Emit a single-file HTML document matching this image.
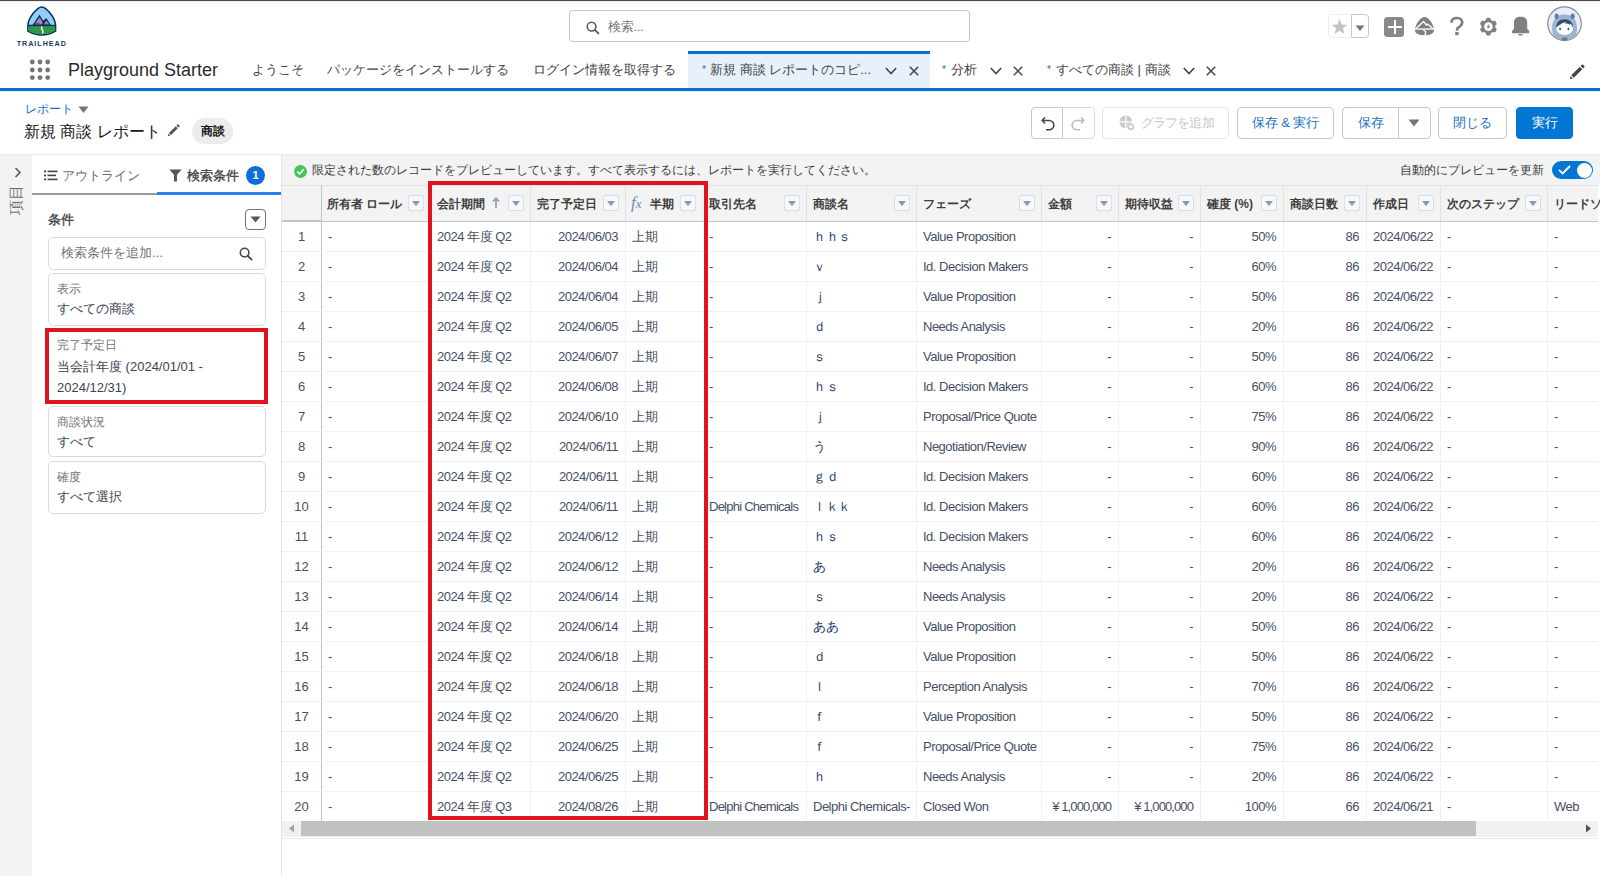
<!DOCTYPE html>
<html><head><meta charset="utf-8">
<style>
*{box-sizing:border-box;margin:0;padding:0}
html,body{width:1600px;height:876px;overflow:hidden;background:#fff;font-family:"Liberation Sans",sans-serif;color:#181818}
.a{position:absolute}
#topline{left:0;top:0;width:1600px;height:1px;background:#4a4a4a}
#hdr{left:0;top:1px;width:1600px;height:49px;background:linear-gradient(#e6e6e6,#fff 1px)}
#nav{left:0;top:50px;width:1600px;height:38px;background:#fff}
#navline{left:0;top:88px;width:1600px;height:3px;background:#0b6fd6}
#navshadow{left:0;top:91px;width:1600px;height:2px;background:linear-gradient(#e9e9e9,#fff)}
#ph{left:0;top:93px;width:1600px;height:61px;background:#fff}
#phline{left:0;top:154px;width:1600px;height:2px;background:#eaeaea}
#body{left:0;top:155px;width:1600px;height:721px;background:#f3f3f3}
.tab{position:absolute;top:51px;height:38px;font-size:13px;color:#444;line-height:38px;white-space:nowrap}
.btn{position:absolute;top:107px;height:32px;border:1px solid #c9c9c9;border-radius:4px;background:#fff;font-size:13px;color:#2270c4;text-align:center;line-height:30px;white-space:nowrap}
</style></head><body>
<div id="topline" class="a"></div>
<div id="hdr" class="a"></div>
<div id="nav" class="a"></div>
<div id="navline" class="a"></div>
<div id="navshadow" class="a"></div>
<div id="ph" class="a"></div>
<div id="body" class="a"></div>
<div id="phline" class="a"></div>

<svg class="a" style="left:0;top:0" width="80" height="50" viewBox="0 0 80 50">
 <path d="M41.7 6.9 C38 6.9 28 17 27.9 26 L27.9 31 C33 34 37 35 41.7 35 C46 35 50.5 34 55.6 31 L55.6 26 C55.5 17 45.5 6.9 41.7 6.9Z" fill="#92cdf5" stroke="#032d60" stroke-width="1.5"/>
 <path d="M28.3 25.8 L55.2 25.8 L55.2 30.8 C50.5 33.5 46 34.3 41.7 34.3 C37 34.3 33 33.5 28.3 30.8Z" fill="#2a9a45"/>
 <path d="M32.2 25.4 L39.5 14.8 L43.2 20.8 L46.2 17.9 L51.2 25.4Z" fill="#032d60"/>
 <path d="M34.3 24.6 L39.5 17.2 L42.5 22 L42 24.6Z" fill="#a48ab5"/>
 <path d="M43.5 24.6 L46.2 20.4 L49.4 24.6Z" fill="#a48ab5"/>
 <path d="M34.6 24.6 L36 22.5 L39 23 L40.5 24.6Z M44 24.6 L45 23.3 L47 24.6Z" fill="#8a35a8"/>
 <rect x="27.9" y="24.8" width="27.7" height="1.3" fill="#032d60"/>
 <path d="M42.3 26.6 C41 27.5 41.5 29 42.3 29.8 C43 30.5 43 32 42.6 33.6" stroke="#fff" stroke-width="1.5" fill="none"/>
 <text x="41.8" y="45.6" text-anchor="middle" font-family="Liberation Sans" font-weight="bold" font-size="7.2" letter-spacing="0.95" fill="#1b3c6b">TRAILHEAD</text>
</svg>
<div class="a" style="left:569px;top:10px;width:401px;height:32px;border:1px solid #c4c4c4;border-radius:4px;background:#fff"></div>
<svg class="a" style="left:586px;top:21px" width="14" height="14" viewBox="0 0 14 14"><circle cx="5.6" cy="5.6" r="4.4" stroke="#555" stroke-width="1.5" fill="none"/><path d="M8.8 8.8 L12.4 12.4" stroke="#555" stroke-width="1.8" stroke-linecap="round"/></svg>
<div class="a" style="left:608px;top:19px;font-size:13px;color:#757575;line-height:16px;letter-spacing:-0.3px">検索...</div>
<!-- star group -->
<div class="a" style="left:1328px;top:14px;width:41px;height:24px;border:1px solid #ececec;border-radius:4px;background:#fff"></div>
<div class="a" style="left:1351px;top:14px;width:18px;height:24px;border:1px solid #c9c9c9;border-radius:0 4px 4px 0;background:#fff"></div>
<svg class="a" style="left:1331px;top:18px" width="17" height="17" viewBox="0 0 24 24"><path d="M12 1.5 L15 9.2 L23 9.5 L16.8 14.6 L18.9 22.5 L12 18 L5.1 22.5 L7.2 14.6 L1 9.5 L9 9.2Z" fill="#c4c4c4"/></svg>
<svg class="a" style="left:1355px;top:25px" width="10" height="7" viewBox="0 0 10 7"><path d="M0.5 0.5 L9.5 0.5 L5 6Z" fill="#747474"/></svg>
<!-- plus -->
<div class="a" style="left:1384px;top:17px;width:20px;height:20px;background:#8a8a8a;border-radius:3.5px"></div>
<div class="a" style="left:1388px;top:26px;width:14px;height:1.8px;background:#fff"></div>
<div class="a" style="left:1394.2px;top:20px;width:1.8px;height:14px;background:#fff"></div>
<svg class="a" style="left:1410px;top:12px" width="125" height="30" viewBox="0 0 125 30">
 <g fill="#808080">
 <path d="M14.5 5 C10.5 5 5 12.5 5 18.5 C5 21.5 9 23.2 14.5 23.2 C20 23.2 24 21.5 24 18.5 C24 12.5 18.5 5 14.5 5Z"/>
 </g>
 <rect x="4.5" y="16.4" width="20" height="1.3" fill="#fff"/>
 <path d="M6.3 16.2 L13.6 9.4 L16.2 13 L17.4 12 L22.6 16.2" stroke="#fff" stroke-width="1.3" fill="none"/>
 <path d="M12.2 13.2 L10 16 L13.5 16Z M17.6 13.8 L16.2 16 L19.4 16Z" fill="#808080"/>
 <path d="M13.4 17.6 L15.8 20 L14.8 23.5" stroke="#fff" stroke-width="1.3" fill="none"/>
 <path d="M41.4 10.8 C41.4 7.4 43.8 6 46.9 6 C50.1 6 52.2 8 52.2 10.6 C52.2 13.4 50 14.4 48.5 15.4 C47.3 16.2 46.9 17 46.9 18.8" stroke="#808080" stroke-width="2.7" fill="none"/>
 <rect x="45.2" y="20" width="3.4" height="3.2" fill="#808080"/>
 <g transform="translate(78.4 14.6)" fill="#808080">
  <circle r="7"/>
  <rect x="-2.4" y="-8.8" width="4.8" height="17.6" rx="1.5"/>
  <rect x="-2.4" y="-8.8" width="4.8" height="17.6" rx="1.5" transform="rotate(60)"/>
  <rect x="-2.4" y="-8.8" width="4.8" height="17.6" rx="1.5" transform="rotate(120)"/>
  <circle r="4.3" fill="#fff"/>
  <path d="M0.9 -3 L-2 0.6 L-0.2 0.6 L-1 3.2 L2 -0.5 L0.2 -0.5Z"/>
 </g>
 <path d="M102 19.6 C102 18.3 103.6 17.5 104 16.5 L104 10.5 C104 6.5 106.5 4.7 110.6 4.7 C114.7 4.7 117.2 6.5 117.2 10.5 L117.2 16.5 C117.6 17.5 119.3 18.3 119.3 19.6 L119.3 20.2 C119.3 20.8 118.8 21.2 118.2 21.2 L103.1 21.2 C102.5 21.2 102 20.8 102 20.2Z" fill="#808080"/>
 <path d="M108.2 22 L112.9 22 C112.9 23 111.8 23.5 110.6 23.5 C109.4 23.5 108.2 23 108.2 22Z" fill="#808080"/>
</svg>
<!-- avatar -->
<svg class="a" style="left:1547px;top:6px" width="36" height="36" viewBox="0 0 36 36">
 <circle cx="17.5" cy="17.75" r="16.8" fill="#e6edf6" stroke="#8c8c8c" stroke-width="1.2"/>
 <clipPath id="avc"><circle cx="17.5" cy="17.75" r="16.2"/></clipPath>
 <g clip-path="url(#avc)">
 <path d="M8 36 C8 33 5.5 30 5.2 24 C4.8 14 9 8.5 17.6 8.5 C26.2 8.5 30.4 14 30 24 C29.7 30 27.2 33 27.2 36Z" fill="#9fb3cf"/>
 <ellipse cx="9.6" cy="10.2" rx="2" ry="2.8" fill="#5f7aa3"/>
 <ellipse cx="25.7" cy="10.2" rx="2" ry="2.8" fill="#5f7aa3"/>
 <ellipse cx="17.6" cy="22.4" rx="8.3" ry="6.6" fill="#fff"/>
 <path d="M9.4 22 C9 16.5 12.5 13.2 17.6 13.2 C22.7 13.2 26.2 16.5 25.8 22 C25 19 24 18 22.5 17.2 L23 19 C21 17.5 19.5 17.3 18 17.5 L18.8 16 C16.5 16.5 15 17 13.5 18.5 C12 19 10.5 20 9.4 22Z" fill="#2f4c7c"/>
 <ellipse cx="13.1" cy="23" rx="0.9" ry="1.3" fill="#2f4c7c"/>
 <ellipse cx="21.4" cy="23" rx="0.9" ry="1.3" fill="#2f4c7c"/>
 <ellipse cx="17.5" cy="34" rx="3.4" ry="2.4" fill="#5f7aa3"/>
 </g>
</svg>


<!-- app launcher dots -->
<svg class="a" style="left:29px;top:59px" width="24" height="23" viewBox="0 0 24 23">
 <g fill="#747474">
 <circle cx="3.3" cy="3" r="2.4"/><circle cx="11" cy="3" r="2.4"/><circle cx="18.7" cy="3" r="2.4"/>
 <circle cx="3.3" cy="11" r="2.4"/><circle cx="11" cy="11" r="2.4"/><circle cx="18.7" cy="11" r="2.4"/>
 <circle cx="3.3" cy="18.6" r="2.4"/><circle cx="11" cy="18.6" r="2.4"/><circle cx="18.7" cy="18.6" r="2.4"/>
 </g></svg>
<div class="a" id="appname" style="left:68px;top:58px;font-size:18px;line-height:24px;color:#2b2b2b;white-space:nowrap">Playground Starter</div>
<div class="tab" style="left:252px">ようこそ</div>
<div class="tab" style="left:327px">パッケージをインストールする</div>
<div class="tab" style="left:533px">ログイン情報を取得する</div>
<div class="a" style="left:688px;top:51px;width:242px;height:3px;background:#0b6fd6"></div>
<div class="a" style="left:688px;top:54px;width:242px;height:34px;background:#e8f1fb"></div>
<div class="a" style="left:702px;top:64px;font-size:10px;color:#0b6fd6;line-height:12px">*</div>
<div class="tab" style="left:710px">新規 商談 レポートのコピ...</div>
<svg class="a" style="left:885px;top:67px" width="12" height="8" viewBox="0 0 12 8"><path d="M0.8 1 L6 6.6 L11.2 1" stroke="#444" stroke-width="1.6" fill="none"/></svg><svg class="a" style="left:909px;top:66px" width="10" height="10" viewBox="0 0 10 10"><path d="M0.8 0.8 L9.2 9.2 M9.2 0.8 L0.8 9.2" stroke="#444" stroke-width="1.5" fill="none"/></svg>
<div class="a" style="left:942px;top:64px;font-size:10px;color:#0b6fd6;line-height:12px">*</div>
<div class="tab" style="left:951px">分析</div>
<svg class="a" style="left:990px;top:67px" width="12" height="8" viewBox="0 0 12 8"><path d="M0.8 1 L6 6.6 L11.2 1" stroke="#444" stroke-width="1.6" fill="none"/></svg><svg class="a" style="left:1013px;top:66px" width="10" height="10" viewBox="0 0 10 10"><path d="M0.8 0.8 L9.2 9.2 M9.2 0.8 L0.8 9.2" stroke="#444" stroke-width="1.5" fill="none"/></svg>
<div class="a" style="left:1047px;top:64px;font-size:10px;color:#0b6fd6;line-height:12px">*</div>
<div class="tab" style="left:1056px">すべての商談 | 商談</div>
<svg class="a" style="left:1183px;top:67px" width="12" height="8" viewBox="0 0 12 8"><path d="M0.8 1 L6 6.6 L11.2 1" stroke="#444" stroke-width="1.6" fill="none"/></svg><svg class="a" style="left:1206px;top:66px" width="10" height="10" viewBox="0 0 10 10"><path d="M0.8 0.8 L9.2 9.2 M9.2 0.8 L0.8 9.2" stroke="#444" stroke-width="1.5" fill="none"/></svg>
<svg class="a" style="left:1569px;top:64px" width="16" height="16" viewBox="0 0 16 16"><path d="M1.5 12 L1 15 L4 14.5Z M2.3 11.2 L10.8 2.7 L13.3 5.2 L4.8 13.7Z M11.6 1.9 L12.8 0.7 C13.2 0.3 13.7 0.3 14.1 0.7 L15.3 1.9 C15.7 2.3 15.7 2.8 15.3 3.2 L14.1 4.4Z" fill="#444"/></svg>


<div class="a" style="left:25px;top:101px;font-size:12.2px;line-height:16px;color:#0b6fd6">レポート</div>
<svg class="a" style="left:78px;top:106px" width="11" height="8" viewBox="0 0 11 8"><path d="M0.5 0.5 L10.5 0.5 L5.5 7Z" fill="#747474"/></svg>
<div class="a" style="left:24px;top:121px;font-size:16px;line-height:22px;color:#181818;white-space:nowrap">新規 商談 レポート</div>
<svg class="a" style="left:167px;top:124px" width="13" height="13" viewBox="0 0 16 16"><path d="M1.5 12 L1 15 L4 14.5Z M2.3 11.2 L10.8 2.7 L13.3 5.2 L4.8 13.7Z M11.6 1.9 L12.8 0.7 C13.2 0.3 13.7 0.3 14.1 0.7 L15.3 1.9 C15.7 2.3 15.7 2.8 15.3 3.2 L14.1 4.4Z" fill="#555"/></svg>
<div class="a" style="left:192px;top:118px;width:41px;height:26px;border-radius:13px;background:#ececec;font-size:12px;font-weight:bold;line-height:26px;text-align:center;color:#181818">商談</div>
<!-- buttons -->
<div class="btn" style="left:1031px;width:64px;border-color:#dddbda"></div>
<div class="btn" style="left:1031px;width:32px;border-color:#c9c9c9;border-radius:4px 0 0 4px"></div>
<svg class="a" style="left:1041px;top:116px" width="14" height="15" viewBox="0 0 14 15"><path d="M4 1.5 L1.2 4.5 L4 7.5" stroke="#444" stroke-width="1.6" fill="none"/><path d="M1.5 4.5 L8 4.5 C10.8 4.5 12.8 6.5 12.8 9.2 C12.8 11.8 10.8 13.8 8 13.8 L5 13.8" stroke="#444" stroke-width="1.6" fill="none"/></svg>
<svg class="a" style="left:1071px;top:116px" width="14" height="15" viewBox="0 0 14 15"><g transform="translate(14,0) scale(-1,1)"><path d="M4 1.5 L1.2 4.5 L4 7.5" stroke="#bbb" stroke-width="1.6" fill="none"/><path d="M1.5 4.5 L8 4.5 C10.8 4.5 12.8 6.5 12.8 9.2 C12.8 11.8 10.8 13.8 8 13.8 L5 13.8" stroke="#bbb" stroke-width="1.6" fill="none"/></g></svg>
<div class="btn" style="left:1102px;width:127px;border-color:#e5e5e5;color:#c9c9c9;text-align:left;padding-left:38px;letter-spacing:-0.9px">グラフを追加</div>
<svg class="a" style="left:1119px;top:115px" width="16" height="16" viewBox="0 0 16 16"><circle cx="6.8" cy="6.8" r="6.3" fill="#c9c9c9"/><path d="M6.8 0.5 L6.8 13 M0.5 6.8 L13 6.8" stroke="#fff" stroke-width="1.2"/><circle cx="11.8" cy="11.8" r="3.6" fill="#fff"/><circle cx="11.8" cy="11.8" r="2.6" fill="none" stroke="#c9c9c9" stroke-width="1.6"/></svg>
<div class="btn" style="left:1237px;width:97px">保存 &amp; 実行</div>
<div class="btn" style="left:1342px;width:89px"></div>
<div class="btn" style="left:1342px;width:57px;border-radius:4px 0 0 4px;border-right-color:#c9c9c9">保存</div>
<svg class="a" style="left:1408px;top:119px" width="12" height="8" viewBox="0 0 12 8"><path d="M0.5 0.5 L11.5 0.5 L6 7.5Z" fill="#747474"/></svg>
<div class="btn" style="left:1438px;width:69px">閉じる</div>
<div class="btn" style="left:1516px;width:57px;background:#0176d3;border-color:#0176d3;color:#fff">実行</div>


<div class="a" style="left:0;top:155px;width:32px;height:721px;background:#f3f3f3"></div>
<svg class="a" style="left:14px;top:167px" width="8" height="11" viewBox="0 0 8 11"><path d="M1.5 1 L6 5.5 L1.5 10" stroke="#555" stroke-width="1.5" fill="none"/></svg>
<div class="a" style="left:0px;top:184px;width:32px;height:32px"><div style="position:absolute;left:-1px;top:8px;width:34px;text-align:center;font-size:15px;line-height:16px;color:#706e6b;transform:rotate(-90deg)">項目</div></div>
<div class="a" style="left:32px;top:155px;width:249px;height:721px;background:#fff"></div>
<div class="a" style="left:281px;top:155px;width:1px;height:721px;background:#dde4ee"></div>
<svg class="a" style="left:44px;top:170px" width="14" height="11" viewBox="0 0 14 11"><g fill="#444"><rect x="0" y="0.5" width="2" height="1.8"/><rect x="0" y="4.5" width="2" height="1.8"/><rect x="0" y="8.5" width="2" height="1.8"/><rect x="3.5" y="0.6" width="10" height="1.6"/><rect x="3.5" y="4.6" width="8.5" height="1.6"/><rect x="3.5" y="8.6" width="10" height="1.6"/></g></svg>
<div class="a" style="left:62px;top:168px;font-size:13px;line-height:16px;color:#706e6b;white-space:nowrap">アウトライン</div>
<svg class="a" style="left:169px;top:169px" width="13" height="13" viewBox="0 0 13 13"><path d="M0.3 0.5 L12.7 0.5 L8 5.8 L8 12.5 L5 12.5 L5 5.8Z" fill="#555"/></svg>
<div class="a" style="left:187px;top:168px;font-size:13px;line-height:16px;color:#444;-webkit-text-stroke:0.35px #444;white-space:nowrap">検索条件</div>
<div class="a" style="left:246px;top:166px;width:19px;height:19px;border-radius:50%;background:#0b6fd6;color:#fff;font-size:11px;font-weight:bold;line-height:19px;text-align:center">1</div>
<div class="a" style="left:32px;top:193px;width:125px;height:2px;background:#9a9a9a"></div>
<div class="a" style="left:157px;top:192px;width:124px;height:3px;background:#2a7ff0"></div>
<div class="a" style="left:48px;top:212px;font-size:13px;line-height:16px;color:#444;-webkit-text-stroke:0.35px #444">条件</div>
<div class="a" style="left:245px;top:209px;width:21px;height:21px;border:1px solid #747474;border-radius:4px;background:#fff"></div>
<svg class="a" style="left:250px;top:216px" width="11" height="7" viewBox="0 0 11 7"><path d="M0.5 0.5 L10.5 0.5 L5.5 6.5Z" fill="#555"/></svg>
<div class="a" style="left:48px;top:237px;width:218px;height:33px;border:1px solid #dddbda;border-radius:5px;background:#fff"></div>
<div class="a" style="left:61px;top:245px;font-size:13px;line-height:16px;color:#747474;white-space:nowrap">検索条件を追加...</div>
<svg class="a" style="left:239px;top:247px" width="14" height="14" viewBox="0 0 14 14"><circle cx="5.6" cy="5.6" r="4.3" stroke="#444" stroke-width="1.5" fill="none"/><path d="M8.8 8.8 L12.6 12.6" stroke="#444" stroke-width="1.8" stroke-linecap="round"/></svg>
<div class="a" style="left:48px;top:273px;width:218px;height:53px;border:1px solid #dddbda;border-radius:5px;background:#fff"></div>
<div class="a" style="left:57px;top:281px;font-size:12px;line-height:16px;color:#747474;white-space:nowrap">表示</div>
<div class="a" style="left:57px;top:299px;font-size:13px;line-height:20px;color:#3a4354;white-space:nowrap">すべての商談</div>
<div class="a" style="left:48px;top:330px;width:218px;height:74px;background:#fff"></div>
<div class="a" style="left:57px;top:337px;font-size:12px;line-height:16px;color:#747474;white-space:nowrap">完了予定日</div>
<div class="a" style="left:57px;top:356px;font-size:13px;line-height:21px;color:#3a4354;white-space:nowrap">当会計年度 (2024/01/01 -<br>2024/12/31)</div>
<div class="a" style="left:48px;top:406px;width:218px;height:51px;border:1px solid #dddbda;border-radius:5px;background:#fff"></div>
<div class="a" style="left:57px;top:414px;font-size:12px;line-height:16px;color:#747474;white-space:nowrap">商談状況</div>
<div class="a" style="left:57px;top:432px;font-size:13px;line-height:20px;color:#3a4354;white-space:nowrap">すべて</div>
<div class="a" style="left:48px;top:461px;width:218px;height:53px;border:1px solid #dddbda;border-radius:5px;background:#fff"></div>
<div class="a" style="left:57px;top:469px;font-size:12px;line-height:16px;color:#747474;white-space:nowrap">確度</div>
<div class="a" style="left:57px;top:487px;font-size:13px;line-height:20px;color:#3a4354;white-space:nowrap">すべて選択</div>
<div class="a" style="left:45px;top:328px;width:223px;height:76px;border:4px solid #e0141e"></div>

<!--MAINSTART-->
<div class="a" style="left:282px;top:155px;width:1318px;height:30px;background:#f3f3f3"></div>
<svg class="a" style="left:294px;top:165px" width="13" height="13" viewBox="0 0 13 13"><circle cx="6.5" cy="6.5" r="6.5" fill="#45c65a"/><path d="M3.3 6.7 L5.5 8.8 L9.8 4.4" stroke="#fff" stroke-width="1.6" fill="none"/></svg>
<div class="a" style="left:312px;top:162px;font-size:12px;line-height:16px;color:#3e3e3c;white-space:nowrap">限定された数のレコードをプレビューしています。すべて表示するには、レポートを実行してください。</div>
<div class="a" style="left:1400px;top:162px;font-size:12px;line-height:16px;color:#3e3e3c;white-space:nowrap">自動的にプレビューを更新</div>
<div class="a" style="left:1552px;top:161px;width:41px;height:18px;border-radius:9px;background:#0176d3"></div>
<div class="a" style="left:1577px;top:162.5px;width:15px;height:15px;border-radius:50%;background:#fff"></div>
<svg class="a" style="left:1558px;top:165px" width="13" height="10" viewBox="0 0 13 10"><path d="M1 4.8 L4.6 8.4 L12 1" stroke="#fff" stroke-width="1.8" fill="none"/></svg>
<div class="a" style="left:282px;top:185px;width:1318px;height:691px;background:#fff"></div>
<div class="a" style="left:282px;top:185px;width:1316px;height:36px;background:#f3f3f3;border-top:1px solid #e0e0e0"></div>
<div class="a" style="left:282px;top:220px;width:39px;height:2px;background:#c4c4c4"></div>
<div class="a" style="left:322px;top:221px;width:1276px;height:1px;background:#bcc8d6"></div>
<div class="a" style="left:321px;top:185px;width:1px;height:636px;background:#b8c6d6"></div>
<div class="a" style="left:430px;top:186px;width:1px;height:35px;background:#dfe3e8"></div>
<div class="a" style="left:430px;top:222px;width:1px;height:599px;background:#eef1f5"></div>
<div class="a" style="left:530px;top:186px;width:1px;height:35px;background:#dfe3e8"></div>
<div class="a" style="left:530px;top:222px;width:1px;height:599px;background:#eef1f5"></div>
<div class="a" style="left:625px;top:186px;width:1px;height:35px;background:#dfe3e8"></div>
<div class="a" style="left:625px;top:222px;width:1px;height:599px;background:#eef1f5"></div>
<div class="a" style="left:705px;top:186px;width:1px;height:35px;background:#dfe3e8"></div>
<div class="a" style="left:705px;top:222px;width:1px;height:599px;background:#eef1f5"></div>
<div class="a" style="left:806px;top:186px;width:1px;height:35px;background:#dfe3e8"></div>
<div class="a" style="left:806px;top:222px;width:1px;height:599px;background:#eef1f5"></div>
<div class="a" style="left:916px;top:186px;width:1px;height:35px;background:#dfe3e8"></div>
<div class="a" style="left:916px;top:222px;width:1px;height:599px;background:#eef1f5"></div>
<div class="a" style="left:1041px;top:186px;width:1px;height:35px;background:#dfe3e8"></div>
<div class="a" style="left:1041px;top:222px;width:1px;height:599px;background:#eef1f5"></div>
<div class="a" style="left:1118px;top:186px;width:1px;height:35px;background:#dfe3e8"></div>
<div class="a" style="left:1118px;top:222px;width:1px;height:599px;background:#eef1f5"></div>
<div class="a" style="left:1200px;top:186px;width:1px;height:35px;background:#dfe3e8"></div>
<div class="a" style="left:1200px;top:222px;width:1px;height:599px;background:#eef1f5"></div>
<div class="a" style="left:1283px;top:186px;width:1px;height:35px;background:#dfe3e8"></div>
<div class="a" style="left:1283px;top:222px;width:1px;height:599px;background:#eef1f5"></div>
<div class="a" style="left:1366px;top:186px;width:1px;height:35px;background:#dfe3e8"></div>
<div class="a" style="left:1366px;top:222px;width:1px;height:599px;background:#eef1f5"></div>
<div class="a" style="left:1440px;top:186px;width:1px;height:35px;background:#dfe3e8"></div>
<div class="a" style="left:1440px;top:222px;width:1px;height:599px;background:#eef1f5"></div>
<div class="a" style="left:1547px;top:186px;width:1px;height:35px;background:#dfe3e8"></div>
<div class="a" style="left:1547px;top:222px;width:1px;height:599px;background:#eef1f5"></div>
<div class="a" style="left:282px;top:251px;width:1316px;height:1px;background:#eceff3"></div>
<div class="a" style="left:282px;top:281px;width:1316px;height:1px;background:#eceff3"></div>
<div class="a" style="left:282px;top:311px;width:1316px;height:1px;background:#eceff3"></div>
<div class="a" style="left:282px;top:341px;width:1316px;height:1px;background:#eceff3"></div>
<div class="a" style="left:282px;top:371px;width:1316px;height:1px;background:#eceff3"></div>
<div class="a" style="left:282px;top:401px;width:1316px;height:1px;background:#eceff3"></div>
<div class="a" style="left:282px;top:431px;width:1316px;height:1px;background:#eceff3"></div>
<div class="a" style="left:282px;top:461px;width:1316px;height:1px;background:#eceff3"></div>
<div class="a" style="left:282px;top:491px;width:1316px;height:1px;background:#eceff3"></div>
<div class="a" style="left:282px;top:521px;width:1316px;height:1px;background:#eceff3"></div>
<div class="a" style="left:282px;top:551px;width:1316px;height:1px;background:#eceff3"></div>
<div class="a" style="left:282px;top:581px;width:1316px;height:1px;background:#eceff3"></div>
<div class="a" style="left:282px;top:611px;width:1316px;height:1px;background:#eceff3"></div>
<div class="a" style="left:282px;top:641px;width:1316px;height:1px;background:#eceff3"></div>
<div class="a" style="left:282px;top:671px;width:1316px;height:1px;background:#eceff3"></div>
<div class="a" style="left:282px;top:701px;width:1316px;height:1px;background:#eceff3"></div>
<div class="a" style="left:282px;top:731px;width:1316px;height:1px;background:#eceff3"></div>
<div class="a" style="left:282px;top:761px;width:1316px;height:1px;background:#eceff3"></div>
<div class="a" style="left:282px;top:791px;width:1316px;height:1px;background:#eceff3"></div>
<div class="a" style="left:327px;top:196px;font-size:12px;font-weight:bold;line-height:16px;color:#3e3e3c;white-space:nowrap">所有者 ロール</div>
<div class="a" style="left:408px;top:195px;width:16px;height:16px;border:1px solid #d8dde6;border-radius:2px;background:#f8f8f8"></div><svg class="a" style="left:412px;top:201px" width="8" height="5" viewBox="0 0 8 5"><path d="M0 0 L8 0 L4 5Z" fill="#7d9ac0"/></svg>
<div class="a" style="left:437px;top:196px;font-size:12px;font-weight:bold;line-height:16px;color:#3e3e3c;white-space:nowrap">会計期間</div>
<div class="a" style="left:508px;top:195px;width:16px;height:16px;border:1px solid #d8dde6;border-radius:2px;background:#f8f8f8"></div><svg class="a" style="left:512px;top:201px" width="8" height="5" viewBox="0 0 8 5"><path d="M0 0 L8 0 L4 5Z" fill="#7d9ac0"/></svg>
<div class="a" style="left:537px;top:196px;font-size:12px;font-weight:bold;line-height:16px;color:#3e3e3c;white-space:nowrap">完了予定日</div>
<div class="a" style="left:603px;top:195px;width:16px;height:16px;border:1px solid #d8dde6;border-radius:2px;background:#f8f8f8"></div><svg class="a" style="left:607px;top:201px" width="8" height="5" viewBox="0 0 8 5"><path d="M0 0 L8 0 L4 5Z" fill="#7d9ac0"/></svg>
<div class="a" style="left:631px;top:194px;font-family:'Liberation Serif',serif;font-style:italic;font-size:17px;line-height:18px;color:#6f8ab3;white-space:nowrap">f<span style="font-size:13px">x</span></div>
<div class="a" style="left:650px;top:196px;font-size:12px;font-weight:bold;line-height:16px;color:#3e3e3c;white-space:nowrap">半期</div>
<div class="a" style="left:680px;top:195px;width:16px;height:16px;border:1px solid #d8dde6;border-radius:2px;background:#f8f8f8"></div><svg class="a" style="left:684px;top:201px" width="8" height="5" viewBox="0 0 8 5"><path d="M0 0 L8 0 L4 5Z" fill="#7d9ac0"/></svg>
<div class="a" style="left:709px;top:196px;font-size:12px;font-weight:bold;line-height:16px;color:#3e3e3c;white-space:nowrap">取引先名</div>
<div class="a" style="left:784px;top:195px;width:16px;height:16px;border:1px solid #d8dde6;border-radius:2px;background:#f8f8f8"></div><svg class="a" style="left:788px;top:201px" width="8" height="5" viewBox="0 0 8 5"><path d="M0 0 L8 0 L4 5Z" fill="#7d9ac0"/></svg>
<div class="a" style="left:813px;top:196px;font-size:12px;font-weight:bold;line-height:16px;color:#3e3e3c;white-space:nowrap">商談名</div>
<div class="a" style="left:894px;top:195px;width:16px;height:16px;border:1px solid #d8dde6;border-radius:2px;background:#f8f8f8"></div><svg class="a" style="left:898px;top:201px" width="8" height="5" viewBox="0 0 8 5"><path d="M0 0 L8 0 L4 5Z" fill="#7d9ac0"/></svg>
<div class="a" style="left:923px;top:196px;font-size:12px;font-weight:bold;line-height:16px;color:#3e3e3c;white-space:nowrap">フェーズ</div>
<div class="a" style="left:1019px;top:195px;width:16px;height:16px;border:1px solid #d8dde6;border-radius:2px;background:#f8f8f8"></div><svg class="a" style="left:1023px;top:201px" width="8" height="5" viewBox="0 0 8 5"><path d="M0 0 L8 0 L4 5Z" fill="#7d9ac0"/></svg>
<div class="a" style="left:1048px;top:196px;font-size:12px;font-weight:bold;line-height:16px;color:#3e3e3c;white-space:nowrap">金額</div>
<div class="a" style="left:1096px;top:195px;width:16px;height:16px;border:1px solid #d8dde6;border-radius:2px;background:#f8f8f8"></div><svg class="a" style="left:1100px;top:201px" width="8" height="5" viewBox="0 0 8 5"><path d="M0 0 L8 0 L4 5Z" fill="#7d9ac0"/></svg>
<div class="a" style="left:1125px;top:196px;font-size:12px;font-weight:bold;line-height:16px;color:#3e3e3c;white-space:nowrap">期待収益</div>
<div class="a" style="left:1178px;top:195px;width:16px;height:16px;border:1px solid #d8dde6;border-radius:2px;background:#f8f8f8"></div><svg class="a" style="left:1182px;top:201px" width="8" height="5" viewBox="0 0 8 5"><path d="M0 0 L8 0 L4 5Z" fill="#7d9ac0"/></svg>
<div class="a" style="left:1207px;top:196px;font-size:12px;font-weight:bold;line-height:16px;color:#3e3e3c;white-space:nowrap">確度 (%)</div>
<div class="a" style="left:1261px;top:195px;width:16px;height:16px;border:1px solid #d8dde6;border-radius:2px;background:#f8f8f8"></div><svg class="a" style="left:1265px;top:201px" width="8" height="5" viewBox="0 0 8 5"><path d="M0 0 L8 0 L4 5Z" fill="#7d9ac0"/></svg>
<div class="a" style="left:1290px;top:196px;font-size:12px;font-weight:bold;line-height:16px;color:#3e3e3c;white-space:nowrap">商談日数</div>
<div class="a" style="left:1344px;top:195px;width:16px;height:16px;border:1px solid #d8dde6;border-radius:2px;background:#f8f8f8"></div><svg class="a" style="left:1348px;top:201px" width="8" height="5" viewBox="0 0 8 5"><path d="M0 0 L8 0 L4 5Z" fill="#7d9ac0"/></svg>
<div class="a" style="left:1373px;top:196px;font-size:12px;font-weight:bold;line-height:16px;color:#3e3e3c;white-space:nowrap">作成日</div>
<div class="a" style="left:1418px;top:195px;width:16px;height:16px;border:1px solid #d8dde6;border-radius:2px;background:#f8f8f8"></div><svg class="a" style="left:1422px;top:201px" width="8" height="5" viewBox="0 0 8 5"><path d="M0 0 L8 0 L4 5Z" fill="#7d9ac0"/></svg>
<div class="a" style="left:1447px;top:196px;font-size:12px;font-weight:bold;line-height:16px;color:#3e3e3c;white-space:nowrap">次のステップ</div>
<div class="a" style="left:1525px;top:195px;width:16px;height:16px;border:1px solid #d8dde6;border-radius:2px;background:#f8f8f8"></div><svg class="a" style="left:1529px;top:201px" width="8" height="5" viewBox="0 0 8 5"><path d="M0 0 L8 0 L4 5Z" fill="#7d9ac0"/></svg>
<div class="a" style="left:1554px;top:196px;font-size:12px;font-weight:bold;line-height:16px;color:#3e3e3c;white-space:nowrap">リードソース</div>
<svg class="a" style="left:492px;top:197px" width="8" height="12" viewBox="0 0 8 12"><path d="M4 11 L4 1.5 M1 4.5 L4 1.2 L7 4.5" stroke="#7d9ac0" stroke-width="1.5" fill="none"/></svg>
<div class="a" style="left:282px;top:229px;width:39px;text-align:center;font-size:13px;line-height:16px;color:#465064">1</div>
<div class="a" style="left:328px;top:229px;font-size:13px;letter-spacing:-0.5px;line-height:16px;color:#465064;white-space:nowrap">-</div>
<div class="a" style="left:437px;top:229px;font-size:13px;letter-spacing:-0.5px;line-height:16px;color:#465064;white-space:nowrap">2024 年度 Q2</div>
<div class="a" style="left:530px;top:229px;width:88px;text-align:right;font-size:13px;letter-spacing:-0.5px;line-height:16px;color:#465064;white-space:nowrap">2024/06/03</div>
<div class="a" style="left:632px;top:229px;font-size:13px;letter-spacing:-0.5px;line-height:16px;color:#465064;white-space:nowrap">上期</div>
<div class="a" style="left:709px;top:229px;font-size:13px;letter-spacing:-0.75px;line-height:16px;color:#465064;white-space:nowrap">-</div>
<div class="a" style="left:813px;top:229px;font-size:13px;letter-spacing:-0.5px;line-height:16px;color:#1b3d6e;white-space:nowrap">ｈｈｓ</div>
<div class="a" style="left:923px;top:229px;font-size:13px;letter-spacing:-0.5px;line-height:16px;color:#465064;white-space:nowrap">Value Proposition</div>
<div class="a" style="left:1041px;top:229px;width:70px;text-align:right;font-size:13px;letter-spacing:-0.5px;line-height:16px;color:#465064;white-space:nowrap">-</div>
<div class="a" style="left:1118px;top:229px;width:75px;text-align:right;font-size:13px;letter-spacing:-0.5px;line-height:16px;color:#465064;white-space:nowrap">-</div>
<div class="a" style="left:1200px;top:229px;width:76px;text-align:right;font-size:13px;letter-spacing:-0.5px;line-height:16px;color:#465064;white-space:nowrap">50%</div>
<div class="a" style="left:1283px;top:229px;width:76px;text-align:right;font-size:13px;letter-spacing:-0.5px;line-height:16px;color:#465064;white-space:nowrap">86</div>
<div class="a" style="left:1373px;top:229px;font-size:13px;letter-spacing:-0.5px;line-height:16px;color:#465064;white-space:nowrap">2024/06/22</div>
<div class="a" style="left:1447px;top:229px;font-size:13px;letter-spacing:-0.5px;line-height:16px;color:#465064;white-space:nowrap">-</div>
<div class="a" style="left:1554px;top:229px;font-size:13px;letter-spacing:-0.5px;line-height:16px;color:#465064;white-space:nowrap">-</div>
<div class="a" style="left:282px;top:259px;width:39px;text-align:center;font-size:13px;line-height:16px;color:#465064">2</div>
<div class="a" style="left:328px;top:259px;font-size:13px;letter-spacing:-0.5px;line-height:16px;color:#465064;white-space:nowrap">-</div>
<div class="a" style="left:437px;top:259px;font-size:13px;letter-spacing:-0.5px;line-height:16px;color:#465064;white-space:nowrap">2024 年度 Q2</div>
<div class="a" style="left:530px;top:259px;width:88px;text-align:right;font-size:13px;letter-spacing:-0.5px;line-height:16px;color:#465064;white-space:nowrap">2024/06/04</div>
<div class="a" style="left:632px;top:259px;font-size:13px;letter-spacing:-0.5px;line-height:16px;color:#465064;white-space:nowrap">上期</div>
<div class="a" style="left:709px;top:259px;font-size:13px;letter-spacing:-0.75px;line-height:16px;color:#465064;white-space:nowrap">-</div>
<div class="a" style="left:813px;top:259px;font-size:13px;letter-spacing:-0.5px;line-height:16px;color:#1b3d6e;white-space:nowrap">ｖ</div>
<div class="a" style="left:923px;top:259px;font-size:13px;letter-spacing:-0.5px;line-height:16px;color:#465064;white-space:nowrap">Id. Decision Makers</div>
<div class="a" style="left:1041px;top:259px;width:70px;text-align:right;font-size:13px;letter-spacing:-0.5px;line-height:16px;color:#465064;white-space:nowrap">-</div>
<div class="a" style="left:1118px;top:259px;width:75px;text-align:right;font-size:13px;letter-spacing:-0.5px;line-height:16px;color:#465064;white-space:nowrap">-</div>
<div class="a" style="left:1200px;top:259px;width:76px;text-align:right;font-size:13px;letter-spacing:-0.5px;line-height:16px;color:#465064;white-space:nowrap">60%</div>
<div class="a" style="left:1283px;top:259px;width:76px;text-align:right;font-size:13px;letter-spacing:-0.5px;line-height:16px;color:#465064;white-space:nowrap">86</div>
<div class="a" style="left:1373px;top:259px;font-size:13px;letter-spacing:-0.5px;line-height:16px;color:#465064;white-space:nowrap">2024/06/22</div>
<div class="a" style="left:1447px;top:259px;font-size:13px;letter-spacing:-0.5px;line-height:16px;color:#465064;white-space:nowrap">-</div>
<div class="a" style="left:1554px;top:259px;font-size:13px;letter-spacing:-0.5px;line-height:16px;color:#465064;white-space:nowrap">-</div>
<div class="a" style="left:282px;top:289px;width:39px;text-align:center;font-size:13px;line-height:16px;color:#465064">3</div>
<div class="a" style="left:328px;top:289px;font-size:13px;letter-spacing:-0.5px;line-height:16px;color:#465064;white-space:nowrap">-</div>
<div class="a" style="left:437px;top:289px;font-size:13px;letter-spacing:-0.5px;line-height:16px;color:#465064;white-space:nowrap">2024 年度 Q2</div>
<div class="a" style="left:530px;top:289px;width:88px;text-align:right;font-size:13px;letter-spacing:-0.5px;line-height:16px;color:#465064;white-space:nowrap">2024/06/04</div>
<div class="a" style="left:632px;top:289px;font-size:13px;letter-spacing:-0.5px;line-height:16px;color:#465064;white-space:nowrap">上期</div>
<div class="a" style="left:709px;top:289px;font-size:13px;letter-spacing:-0.75px;line-height:16px;color:#465064;white-space:nowrap">-</div>
<div class="a" style="left:813px;top:289px;font-size:13px;letter-spacing:-0.5px;line-height:16px;color:#1b3d6e;white-space:nowrap">ｊ</div>
<div class="a" style="left:923px;top:289px;font-size:13px;letter-spacing:-0.5px;line-height:16px;color:#465064;white-space:nowrap">Value Proposition</div>
<div class="a" style="left:1041px;top:289px;width:70px;text-align:right;font-size:13px;letter-spacing:-0.5px;line-height:16px;color:#465064;white-space:nowrap">-</div>
<div class="a" style="left:1118px;top:289px;width:75px;text-align:right;font-size:13px;letter-spacing:-0.5px;line-height:16px;color:#465064;white-space:nowrap">-</div>
<div class="a" style="left:1200px;top:289px;width:76px;text-align:right;font-size:13px;letter-spacing:-0.5px;line-height:16px;color:#465064;white-space:nowrap">50%</div>
<div class="a" style="left:1283px;top:289px;width:76px;text-align:right;font-size:13px;letter-spacing:-0.5px;line-height:16px;color:#465064;white-space:nowrap">86</div>
<div class="a" style="left:1373px;top:289px;font-size:13px;letter-spacing:-0.5px;line-height:16px;color:#465064;white-space:nowrap">2024/06/22</div>
<div class="a" style="left:1447px;top:289px;font-size:13px;letter-spacing:-0.5px;line-height:16px;color:#465064;white-space:nowrap">-</div>
<div class="a" style="left:1554px;top:289px;font-size:13px;letter-spacing:-0.5px;line-height:16px;color:#465064;white-space:nowrap">-</div>
<div class="a" style="left:282px;top:319px;width:39px;text-align:center;font-size:13px;line-height:16px;color:#465064">4</div>
<div class="a" style="left:328px;top:319px;font-size:13px;letter-spacing:-0.5px;line-height:16px;color:#465064;white-space:nowrap">-</div>
<div class="a" style="left:437px;top:319px;font-size:13px;letter-spacing:-0.5px;line-height:16px;color:#465064;white-space:nowrap">2024 年度 Q2</div>
<div class="a" style="left:530px;top:319px;width:88px;text-align:right;font-size:13px;letter-spacing:-0.5px;line-height:16px;color:#465064;white-space:nowrap">2024/06/05</div>
<div class="a" style="left:632px;top:319px;font-size:13px;letter-spacing:-0.5px;line-height:16px;color:#465064;white-space:nowrap">上期</div>
<div class="a" style="left:709px;top:319px;font-size:13px;letter-spacing:-0.75px;line-height:16px;color:#465064;white-space:nowrap">-</div>
<div class="a" style="left:813px;top:319px;font-size:13px;letter-spacing:-0.5px;line-height:16px;color:#1b3d6e;white-space:nowrap">ｄ</div>
<div class="a" style="left:923px;top:319px;font-size:13px;letter-spacing:-0.5px;line-height:16px;color:#465064;white-space:nowrap">Needs Analysis</div>
<div class="a" style="left:1041px;top:319px;width:70px;text-align:right;font-size:13px;letter-spacing:-0.5px;line-height:16px;color:#465064;white-space:nowrap">-</div>
<div class="a" style="left:1118px;top:319px;width:75px;text-align:right;font-size:13px;letter-spacing:-0.5px;line-height:16px;color:#465064;white-space:nowrap">-</div>
<div class="a" style="left:1200px;top:319px;width:76px;text-align:right;font-size:13px;letter-spacing:-0.5px;line-height:16px;color:#465064;white-space:nowrap">20%</div>
<div class="a" style="left:1283px;top:319px;width:76px;text-align:right;font-size:13px;letter-spacing:-0.5px;line-height:16px;color:#465064;white-space:nowrap">86</div>
<div class="a" style="left:1373px;top:319px;font-size:13px;letter-spacing:-0.5px;line-height:16px;color:#465064;white-space:nowrap">2024/06/22</div>
<div class="a" style="left:1447px;top:319px;font-size:13px;letter-spacing:-0.5px;line-height:16px;color:#465064;white-space:nowrap">-</div>
<div class="a" style="left:1554px;top:319px;font-size:13px;letter-spacing:-0.5px;line-height:16px;color:#465064;white-space:nowrap">-</div>
<div class="a" style="left:282px;top:349px;width:39px;text-align:center;font-size:13px;line-height:16px;color:#465064">5</div>
<div class="a" style="left:328px;top:349px;font-size:13px;letter-spacing:-0.5px;line-height:16px;color:#465064;white-space:nowrap">-</div>
<div class="a" style="left:437px;top:349px;font-size:13px;letter-spacing:-0.5px;line-height:16px;color:#465064;white-space:nowrap">2024 年度 Q2</div>
<div class="a" style="left:530px;top:349px;width:88px;text-align:right;font-size:13px;letter-spacing:-0.5px;line-height:16px;color:#465064;white-space:nowrap">2024/06/07</div>
<div class="a" style="left:632px;top:349px;font-size:13px;letter-spacing:-0.5px;line-height:16px;color:#465064;white-space:nowrap">上期</div>
<div class="a" style="left:709px;top:349px;font-size:13px;letter-spacing:-0.75px;line-height:16px;color:#465064;white-space:nowrap">-</div>
<div class="a" style="left:813px;top:349px;font-size:13px;letter-spacing:-0.5px;line-height:16px;color:#1b3d6e;white-space:nowrap">ｓ</div>
<div class="a" style="left:923px;top:349px;font-size:13px;letter-spacing:-0.5px;line-height:16px;color:#465064;white-space:nowrap">Value Proposition</div>
<div class="a" style="left:1041px;top:349px;width:70px;text-align:right;font-size:13px;letter-spacing:-0.5px;line-height:16px;color:#465064;white-space:nowrap">-</div>
<div class="a" style="left:1118px;top:349px;width:75px;text-align:right;font-size:13px;letter-spacing:-0.5px;line-height:16px;color:#465064;white-space:nowrap">-</div>
<div class="a" style="left:1200px;top:349px;width:76px;text-align:right;font-size:13px;letter-spacing:-0.5px;line-height:16px;color:#465064;white-space:nowrap">50%</div>
<div class="a" style="left:1283px;top:349px;width:76px;text-align:right;font-size:13px;letter-spacing:-0.5px;line-height:16px;color:#465064;white-space:nowrap">86</div>
<div class="a" style="left:1373px;top:349px;font-size:13px;letter-spacing:-0.5px;line-height:16px;color:#465064;white-space:nowrap">2024/06/22</div>
<div class="a" style="left:1447px;top:349px;font-size:13px;letter-spacing:-0.5px;line-height:16px;color:#465064;white-space:nowrap">-</div>
<div class="a" style="left:1554px;top:349px;font-size:13px;letter-spacing:-0.5px;line-height:16px;color:#465064;white-space:nowrap">-</div>
<div class="a" style="left:282px;top:379px;width:39px;text-align:center;font-size:13px;line-height:16px;color:#465064">6</div>
<div class="a" style="left:328px;top:379px;font-size:13px;letter-spacing:-0.5px;line-height:16px;color:#465064;white-space:nowrap">-</div>
<div class="a" style="left:437px;top:379px;font-size:13px;letter-spacing:-0.5px;line-height:16px;color:#465064;white-space:nowrap">2024 年度 Q2</div>
<div class="a" style="left:530px;top:379px;width:88px;text-align:right;font-size:13px;letter-spacing:-0.5px;line-height:16px;color:#465064;white-space:nowrap">2024/06/08</div>
<div class="a" style="left:632px;top:379px;font-size:13px;letter-spacing:-0.5px;line-height:16px;color:#465064;white-space:nowrap">上期</div>
<div class="a" style="left:709px;top:379px;font-size:13px;letter-spacing:-0.75px;line-height:16px;color:#465064;white-space:nowrap">-</div>
<div class="a" style="left:813px;top:379px;font-size:13px;letter-spacing:-0.5px;line-height:16px;color:#1b3d6e;white-space:nowrap">ｈｓ</div>
<div class="a" style="left:923px;top:379px;font-size:13px;letter-spacing:-0.5px;line-height:16px;color:#465064;white-space:nowrap">Id. Decision Makers</div>
<div class="a" style="left:1041px;top:379px;width:70px;text-align:right;font-size:13px;letter-spacing:-0.5px;line-height:16px;color:#465064;white-space:nowrap">-</div>
<div class="a" style="left:1118px;top:379px;width:75px;text-align:right;font-size:13px;letter-spacing:-0.5px;line-height:16px;color:#465064;white-space:nowrap">-</div>
<div class="a" style="left:1200px;top:379px;width:76px;text-align:right;font-size:13px;letter-spacing:-0.5px;line-height:16px;color:#465064;white-space:nowrap">60%</div>
<div class="a" style="left:1283px;top:379px;width:76px;text-align:right;font-size:13px;letter-spacing:-0.5px;line-height:16px;color:#465064;white-space:nowrap">86</div>
<div class="a" style="left:1373px;top:379px;font-size:13px;letter-spacing:-0.5px;line-height:16px;color:#465064;white-space:nowrap">2024/06/22</div>
<div class="a" style="left:1447px;top:379px;font-size:13px;letter-spacing:-0.5px;line-height:16px;color:#465064;white-space:nowrap">-</div>
<div class="a" style="left:1554px;top:379px;font-size:13px;letter-spacing:-0.5px;line-height:16px;color:#465064;white-space:nowrap">-</div>
<div class="a" style="left:282px;top:409px;width:39px;text-align:center;font-size:13px;line-height:16px;color:#465064">7</div>
<div class="a" style="left:328px;top:409px;font-size:13px;letter-spacing:-0.5px;line-height:16px;color:#465064;white-space:nowrap">-</div>
<div class="a" style="left:437px;top:409px;font-size:13px;letter-spacing:-0.5px;line-height:16px;color:#465064;white-space:nowrap">2024 年度 Q2</div>
<div class="a" style="left:530px;top:409px;width:88px;text-align:right;font-size:13px;letter-spacing:-0.5px;line-height:16px;color:#465064;white-space:nowrap">2024/06/10</div>
<div class="a" style="left:632px;top:409px;font-size:13px;letter-spacing:-0.5px;line-height:16px;color:#465064;white-space:nowrap">上期</div>
<div class="a" style="left:709px;top:409px;font-size:13px;letter-spacing:-0.75px;line-height:16px;color:#465064;white-space:nowrap">-</div>
<div class="a" style="left:813px;top:409px;font-size:13px;letter-spacing:-0.5px;line-height:16px;color:#1b3d6e;white-space:nowrap">ｊ</div>
<div class="a" style="left:923px;top:409px;font-size:13px;letter-spacing:-0.5px;line-height:16px;color:#465064;white-space:nowrap">Proposal/Price Quote</div>
<div class="a" style="left:1041px;top:409px;width:70px;text-align:right;font-size:13px;letter-spacing:-0.5px;line-height:16px;color:#465064;white-space:nowrap">-</div>
<div class="a" style="left:1118px;top:409px;width:75px;text-align:right;font-size:13px;letter-spacing:-0.5px;line-height:16px;color:#465064;white-space:nowrap">-</div>
<div class="a" style="left:1200px;top:409px;width:76px;text-align:right;font-size:13px;letter-spacing:-0.5px;line-height:16px;color:#465064;white-space:nowrap">75%</div>
<div class="a" style="left:1283px;top:409px;width:76px;text-align:right;font-size:13px;letter-spacing:-0.5px;line-height:16px;color:#465064;white-space:nowrap">86</div>
<div class="a" style="left:1373px;top:409px;font-size:13px;letter-spacing:-0.5px;line-height:16px;color:#465064;white-space:nowrap">2024/06/22</div>
<div class="a" style="left:1447px;top:409px;font-size:13px;letter-spacing:-0.5px;line-height:16px;color:#465064;white-space:nowrap">-</div>
<div class="a" style="left:1554px;top:409px;font-size:13px;letter-spacing:-0.5px;line-height:16px;color:#465064;white-space:nowrap">-</div>
<div class="a" style="left:282px;top:439px;width:39px;text-align:center;font-size:13px;line-height:16px;color:#465064">8</div>
<div class="a" style="left:328px;top:439px;font-size:13px;letter-spacing:-0.5px;line-height:16px;color:#465064;white-space:nowrap">-</div>
<div class="a" style="left:437px;top:439px;font-size:13px;letter-spacing:-0.5px;line-height:16px;color:#465064;white-space:nowrap">2024 年度 Q2</div>
<div class="a" style="left:530px;top:439px;width:88px;text-align:right;font-size:13px;letter-spacing:-0.5px;line-height:16px;color:#465064;white-space:nowrap">2024/06/11</div>
<div class="a" style="left:632px;top:439px;font-size:13px;letter-spacing:-0.5px;line-height:16px;color:#465064;white-space:nowrap">上期</div>
<div class="a" style="left:709px;top:439px;font-size:13px;letter-spacing:-0.75px;line-height:16px;color:#465064;white-space:nowrap">-</div>
<div class="a" style="left:813px;top:439px;font-size:13px;letter-spacing:-0.5px;line-height:16px;color:#1b3d6e;white-space:nowrap">う</div>
<div class="a" style="left:923px;top:439px;font-size:13px;letter-spacing:-0.5px;line-height:16px;color:#465064;white-space:nowrap">Negotiation/Review</div>
<div class="a" style="left:1041px;top:439px;width:70px;text-align:right;font-size:13px;letter-spacing:-0.5px;line-height:16px;color:#465064;white-space:nowrap">-</div>
<div class="a" style="left:1118px;top:439px;width:75px;text-align:right;font-size:13px;letter-spacing:-0.5px;line-height:16px;color:#465064;white-space:nowrap">-</div>
<div class="a" style="left:1200px;top:439px;width:76px;text-align:right;font-size:13px;letter-spacing:-0.5px;line-height:16px;color:#465064;white-space:nowrap">90%</div>
<div class="a" style="left:1283px;top:439px;width:76px;text-align:right;font-size:13px;letter-spacing:-0.5px;line-height:16px;color:#465064;white-space:nowrap">86</div>
<div class="a" style="left:1373px;top:439px;font-size:13px;letter-spacing:-0.5px;line-height:16px;color:#465064;white-space:nowrap">2024/06/22</div>
<div class="a" style="left:1447px;top:439px;font-size:13px;letter-spacing:-0.5px;line-height:16px;color:#465064;white-space:nowrap">-</div>
<div class="a" style="left:1554px;top:439px;font-size:13px;letter-spacing:-0.5px;line-height:16px;color:#465064;white-space:nowrap">-</div>
<div class="a" style="left:282px;top:469px;width:39px;text-align:center;font-size:13px;line-height:16px;color:#465064">9</div>
<div class="a" style="left:328px;top:469px;font-size:13px;letter-spacing:-0.5px;line-height:16px;color:#465064;white-space:nowrap">-</div>
<div class="a" style="left:437px;top:469px;font-size:13px;letter-spacing:-0.5px;line-height:16px;color:#465064;white-space:nowrap">2024 年度 Q2</div>
<div class="a" style="left:530px;top:469px;width:88px;text-align:right;font-size:13px;letter-spacing:-0.5px;line-height:16px;color:#465064;white-space:nowrap">2024/06/11</div>
<div class="a" style="left:632px;top:469px;font-size:13px;letter-spacing:-0.5px;line-height:16px;color:#465064;white-space:nowrap">上期</div>
<div class="a" style="left:709px;top:469px;font-size:13px;letter-spacing:-0.75px;line-height:16px;color:#465064;white-space:nowrap">-</div>
<div class="a" style="left:813px;top:469px;font-size:13px;letter-spacing:-0.5px;line-height:16px;color:#1b3d6e;white-space:nowrap">ｇｄ</div>
<div class="a" style="left:923px;top:469px;font-size:13px;letter-spacing:-0.5px;line-height:16px;color:#465064;white-space:nowrap">Id. Decision Makers</div>
<div class="a" style="left:1041px;top:469px;width:70px;text-align:right;font-size:13px;letter-spacing:-0.5px;line-height:16px;color:#465064;white-space:nowrap">-</div>
<div class="a" style="left:1118px;top:469px;width:75px;text-align:right;font-size:13px;letter-spacing:-0.5px;line-height:16px;color:#465064;white-space:nowrap">-</div>
<div class="a" style="left:1200px;top:469px;width:76px;text-align:right;font-size:13px;letter-spacing:-0.5px;line-height:16px;color:#465064;white-space:nowrap">60%</div>
<div class="a" style="left:1283px;top:469px;width:76px;text-align:right;font-size:13px;letter-spacing:-0.5px;line-height:16px;color:#465064;white-space:nowrap">86</div>
<div class="a" style="left:1373px;top:469px;font-size:13px;letter-spacing:-0.5px;line-height:16px;color:#465064;white-space:nowrap">2024/06/22</div>
<div class="a" style="left:1447px;top:469px;font-size:13px;letter-spacing:-0.5px;line-height:16px;color:#465064;white-space:nowrap">-</div>
<div class="a" style="left:1554px;top:469px;font-size:13px;letter-spacing:-0.5px;line-height:16px;color:#465064;white-space:nowrap">-</div>
<div class="a" style="left:282px;top:499px;width:39px;text-align:center;font-size:13px;line-height:16px;color:#465064">10</div>
<div class="a" style="left:328px;top:499px;font-size:13px;letter-spacing:-0.5px;line-height:16px;color:#465064;white-space:nowrap">-</div>
<div class="a" style="left:437px;top:499px;font-size:13px;letter-spacing:-0.5px;line-height:16px;color:#465064;white-space:nowrap">2024 年度 Q2</div>
<div class="a" style="left:530px;top:499px;width:88px;text-align:right;font-size:13px;letter-spacing:-0.5px;line-height:16px;color:#465064;white-space:nowrap">2024/06/11</div>
<div class="a" style="left:632px;top:499px;font-size:13px;letter-spacing:-0.5px;line-height:16px;color:#465064;white-space:nowrap">上期</div>
<div class="a" style="left:709px;top:499px;font-size:13px;letter-spacing:-0.75px;line-height:16px;color:#465064;white-space:nowrap">Delphi Chemicals</div>
<div class="a" style="left:813px;top:499px;font-size:13px;letter-spacing:-0.5px;line-height:16px;color:#1b3d6e;white-space:nowrap">ｌｋｋ</div>
<div class="a" style="left:923px;top:499px;font-size:13px;letter-spacing:-0.5px;line-height:16px;color:#465064;white-space:nowrap">Id. Decision Makers</div>
<div class="a" style="left:1041px;top:499px;width:70px;text-align:right;font-size:13px;letter-spacing:-0.5px;line-height:16px;color:#465064;white-space:nowrap">-</div>
<div class="a" style="left:1118px;top:499px;width:75px;text-align:right;font-size:13px;letter-spacing:-0.5px;line-height:16px;color:#465064;white-space:nowrap">-</div>
<div class="a" style="left:1200px;top:499px;width:76px;text-align:right;font-size:13px;letter-spacing:-0.5px;line-height:16px;color:#465064;white-space:nowrap">60%</div>
<div class="a" style="left:1283px;top:499px;width:76px;text-align:right;font-size:13px;letter-spacing:-0.5px;line-height:16px;color:#465064;white-space:nowrap">86</div>
<div class="a" style="left:1373px;top:499px;font-size:13px;letter-spacing:-0.5px;line-height:16px;color:#465064;white-space:nowrap">2024/06/22</div>
<div class="a" style="left:1447px;top:499px;font-size:13px;letter-spacing:-0.5px;line-height:16px;color:#465064;white-space:nowrap">-</div>
<div class="a" style="left:1554px;top:499px;font-size:13px;letter-spacing:-0.5px;line-height:16px;color:#465064;white-space:nowrap">-</div>
<div class="a" style="left:282px;top:529px;width:39px;text-align:center;font-size:13px;line-height:16px;color:#465064">11</div>
<div class="a" style="left:328px;top:529px;font-size:13px;letter-spacing:-0.5px;line-height:16px;color:#465064;white-space:nowrap">-</div>
<div class="a" style="left:437px;top:529px;font-size:13px;letter-spacing:-0.5px;line-height:16px;color:#465064;white-space:nowrap">2024 年度 Q2</div>
<div class="a" style="left:530px;top:529px;width:88px;text-align:right;font-size:13px;letter-spacing:-0.5px;line-height:16px;color:#465064;white-space:nowrap">2024/06/12</div>
<div class="a" style="left:632px;top:529px;font-size:13px;letter-spacing:-0.5px;line-height:16px;color:#465064;white-space:nowrap">上期</div>
<div class="a" style="left:709px;top:529px;font-size:13px;letter-spacing:-0.75px;line-height:16px;color:#465064;white-space:nowrap">-</div>
<div class="a" style="left:813px;top:529px;font-size:13px;letter-spacing:-0.5px;line-height:16px;color:#1b3d6e;white-space:nowrap">ｈｓ</div>
<div class="a" style="left:923px;top:529px;font-size:13px;letter-spacing:-0.5px;line-height:16px;color:#465064;white-space:nowrap">Id. Decision Makers</div>
<div class="a" style="left:1041px;top:529px;width:70px;text-align:right;font-size:13px;letter-spacing:-0.5px;line-height:16px;color:#465064;white-space:nowrap">-</div>
<div class="a" style="left:1118px;top:529px;width:75px;text-align:right;font-size:13px;letter-spacing:-0.5px;line-height:16px;color:#465064;white-space:nowrap">-</div>
<div class="a" style="left:1200px;top:529px;width:76px;text-align:right;font-size:13px;letter-spacing:-0.5px;line-height:16px;color:#465064;white-space:nowrap">60%</div>
<div class="a" style="left:1283px;top:529px;width:76px;text-align:right;font-size:13px;letter-spacing:-0.5px;line-height:16px;color:#465064;white-space:nowrap">86</div>
<div class="a" style="left:1373px;top:529px;font-size:13px;letter-spacing:-0.5px;line-height:16px;color:#465064;white-space:nowrap">2024/06/22</div>
<div class="a" style="left:1447px;top:529px;font-size:13px;letter-spacing:-0.5px;line-height:16px;color:#465064;white-space:nowrap">-</div>
<div class="a" style="left:1554px;top:529px;font-size:13px;letter-spacing:-0.5px;line-height:16px;color:#465064;white-space:nowrap">-</div>
<div class="a" style="left:282px;top:559px;width:39px;text-align:center;font-size:13px;line-height:16px;color:#465064">12</div>
<div class="a" style="left:328px;top:559px;font-size:13px;letter-spacing:-0.5px;line-height:16px;color:#465064;white-space:nowrap">-</div>
<div class="a" style="left:437px;top:559px;font-size:13px;letter-spacing:-0.5px;line-height:16px;color:#465064;white-space:nowrap">2024 年度 Q2</div>
<div class="a" style="left:530px;top:559px;width:88px;text-align:right;font-size:13px;letter-spacing:-0.5px;line-height:16px;color:#465064;white-space:nowrap">2024/06/12</div>
<div class="a" style="left:632px;top:559px;font-size:13px;letter-spacing:-0.5px;line-height:16px;color:#465064;white-space:nowrap">上期</div>
<div class="a" style="left:709px;top:559px;font-size:13px;letter-spacing:-0.75px;line-height:16px;color:#465064;white-space:nowrap">-</div>
<div class="a" style="left:813px;top:559px;font-size:13px;letter-spacing:-0.5px;line-height:16px;color:#1b3d6e;white-space:nowrap">あ</div>
<div class="a" style="left:923px;top:559px;font-size:13px;letter-spacing:-0.5px;line-height:16px;color:#465064;white-space:nowrap">Needs Analysis</div>
<div class="a" style="left:1041px;top:559px;width:70px;text-align:right;font-size:13px;letter-spacing:-0.5px;line-height:16px;color:#465064;white-space:nowrap">-</div>
<div class="a" style="left:1118px;top:559px;width:75px;text-align:right;font-size:13px;letter-spacing:-0.5px;line-height:16px;color:#465064;white-space:nowrap">-</div>
<div class="a" style="left:1200px;top:559px;width:76px;text-align:right;font-size:13px;letter-spacing:-0.5px;line-height:16px;color:#465064;white-space:nowrap">20%</div>
<div class="a" style="left:1283px;top:559px;width:76px;text-align:right;font-size:13px;letter-spacing:-0.5px;line-height:16px;color:#465064;white-space:nowrap">86</div>
<div class="a" style="left:1373px;top:559px;font-size:13px;letter-spacing:-0.5px;line-height:16px;color:#465064;white-space:nowrap">2024/06/22</div>
<div class="a" style="left:1447px;top:559px;font-size:13px;letter-spacing:-0.5px;line-height:16px;color:#465064;white-space:nowrap">-</div>
<div class="a" style="left:1554px;top:559px;font-size:13px;letter-spacing:-0.5px;line-height:16px;color:#465064;white-space:nowrap">-</div>
<div class="a" style="left:282px;top:589px;width:39px;text-align:center;font-size:13px;line-height:16px;color:#465064">13</div>
<div class="a" style="left:328px;top:589px;font-size:13px;letter-spacing:-0.5px;line-height:16px;color:#465064;white-space:nowrap">-</div>
<div class="a" style="left:437px;top:589px;font-size:13px;letter-spacing:-0.5px;line-height:16px;color:#465064;white-space:nowrap">2024 年度 Q2</div>
<div class="a" style="left:530px;top:589px;width:88px;text-align:right;font-size:13px;letter-spacing:-0.5px;line-height:16px;color:#465064;white-space:nowrap">2024/06/14</div>
<div class="a" style="left:632px;top:589px;font-size:13px;letter-spacing:-0.5px;line-height:16px;color:#465064;white-space:nowrap">上期</div>
<div class="a" style="left:709px;top:589px;font-size:13px;letter-spacing:-0.75px;line-height:16px;color:#465064;white-space:nowrap">-</div>
<div class="a" style="left:813px;top:589px;font-size:13px;letter-spacing:-0.5px;line-height:16px;color:#1b3d6e;white-space:nowrap">ｓ</div>
<div class="a" style="left:923px;top:589px;font-size:13px;letter-spacing:-0.5px;line-height:16px;color:#465064;white-space:nowrap">Needs Analysis</div>
<div class="a" style="left:1041px;top:589px;width:70px;text-align:right;font-size:13px;letter-spacing:-0.5px;line-height:16px;color:#465064;white-space:nowrap">-</div>
<div class="a" style="left:1118px;top:589px;width:75px;text-align:right;font-size:13px;letter-spacing:-0.5px;line-height:16px;color:#465064;white-space:nowrap">-</div>
<div class="a" style="left:1200px;top:589px;width:76px;text-align:right;font-size:13px;letter-spacing:-0.5px;line-height:16px;color:#465064;white-space:nowrap">20%</div>
<div class="a" style="left:1283px;top:589px;width:76px;text-align:right;font-size:13px;letter-spacing:-0.5px;line-height:16px;color:#465064;white-space:nowrap">86</div>
<div class="a" style="left:1373px;top:589px;font-size:13px;letter-spacing:-0.5px;line-height:16px;color:#465064;white-space:nowrap">2024/06/22</div>
<div class="a" style="left:1447px;top:589px;font-size:13px;letter-spacing:-0.5px;line-height:16px;color:#465064;white-space:nowrap">-</div>
<div class="a" style="left:1554px;top:589px;font-size:13px;letter-spacing:-0.5px;line-height:16px;color:#465064;white-space:nowrap">-</div>
<div class="a" style="left:282px;top:619px;width:39px;text-align:center;font-size:13px;line-height:16px;color:#465064">14</div>
<div class="a" style="left:328px;top:619px;font-size:13px;letter-spacing:-0.5px;line-height:16px;color:#465064;white-space:nowrap">-</div>
<div class="a" style="left:437px;top:619px;font-size:13px;letter-spacing:-0.5px;line-height:16px;color:#465064;white-space:nowrap">2024 年度 Q2</div>
<div class="a" style="left:530px;top:619px;width:88px;text-align:right;font-size:13px;letter-spacing:-0.5px;line-height:16px;color:#465064;white-space:nowrap">2024/06/14</div>
<div class="a" style="left:632px;top:619px;font-size:13px;letter-spacing:-0.5px;line-height:16px;color:#465064;white-space:nowrap">上期</div>
<div class="a" style="left:709px;top:619px;font-size:13px;letter-spacing:-0.75px;line-height:16px;color:#465064;white-space:nowrap">-</div>
<div class="a" style="left:813px;top:619px;font-size:13px;letter-spacing:-0.5px;line-height:16px;color:#1b3d6e;white-space:nowrap">ああ</div>
<div class="a" style="left:923px;top:619px;font-size:13px;letter-spacing:-0.5px;line-height:16px;color:#465064;white-space:nowrap">Value Proposition</div>
<div class="a" style="left:1041px;top:619px;width:70px;text-align:right;font-size:13px;letter-spacing:-0.5px;line-height:16px;color:#465064;white-space:nowrap">-</div>
<div class="a" style="left:1118px;top:619px;width:75px;text-align:right;font-size:13px;letter-spacing:-0.5px;line-height:16px;color:#465064;white-space:nowrap">-</div>
<div class="a" style="left:1200px;top:619px;width:76px;text-align:right;font-size:13px;letter-spacing:-0.5px;line-height:16px;color:#465064;white-space:nowrap">50%</div>
<div class="a" style="left:1283px;top:619px;width:76px;text-align:right;font-size:13px;letter-spacing:-0.5px;line-height:16px;color:#465064;white-space:nowrap">86</div>
<div class="a" style="left:1373px;top:619px;font-size:13px;letter-spacing:-0.5px;line-height:16px;color:#465064;white-space:nowrap">2024/06/22</div>
<div class="a" style="left:1447px;top:619px;font-size:13px;letter-spacing:-0.5px;line-height:16px;color:#465064;white-space:nowrap">-</div>
<div class="a" style="left:1554px;top:619px;font-size:13px;letter-spacing:-0.5px;line-height:16px;color:#465064;white-space:nowrap">-</div>
<div class="a" style="left:282px;top:649px;width:39px;text-align:center;font-size:13px;line-height:16px;color:#465064">15</div>
<div class="a" style="left:328px;top:649px;font-size:13px;letter-spacing:-0.5px;line-height:16px;color:#465064;white-space:nowrap">-</div>
<div class="a" style="left:437px;top:649px;font-size:13px;letter-spacing:-0.5px;line-height:16px;color:#465064;white-space:nowrap">2024 年度 Q2</div>
<div class="a" style="left:530px;top:649px;width:88px;text-align:right;font-size:13px;letter-spacing:-0.5px;line-height:16px;color:#465064;white-space:nowrap">2024/06/18</div>
<div class="a" style="left:632px;top:649px;font-size:13px;letter-spacing:-0.5px;line-height:16px;color:#465064;white-space:nowrap">上期</div>
<div class="a" style="left:709px;top:649px;font-size:13px;letter-spacing:-0.75px;line-height:16px;color:#465064;white-space:nowrap">-</div>
<div class="a" style="left:813px;top:649px;font-size:13px;letter-spacing:-0.5px;line-height:16px;color:#1b3d6e;white-space:nowrap">ｄ</div>
<div class="a" style="left:923px;top:649px;font-size:13px;letter-spacing:-0.5px;line-height:16px;color:#465064;white-space:nowrap">Value Proposition</div>
<div class="a" style="left:1041px;top:649px;width:70px;text-align:right;font-size:13px;letter-spacing:-0.5px;line-height:16px;color:#465064;white-space:nowrap">-</div>
<div class="a" style="left:1118px;top:649px;width:75px;text-align:right;font-size:13px;letter-spacing:-0.5px;line-height:16px;color:#465064;white-space:nowrap">-</div>
<div class="a" style="left:1200px;top:649px;width:76px;text-align:right;font-size:13px;letter-spacing:-0.5px;line-height:16px;color:#465064;white-space:nowrap">50%</div>
<div class="a" style="left:1283px;top:649px;width:76px;text-align:right;font-size:13px;letter-spacing:-0.5px;line-height:16px;color:#465064;white-space:nowrap">86</div>
<div class="a" style="left:1373px;top:649px;font-size:13px;letter-spacing:-0.5px;line-height:16px;color:#465064;white-space:nowrap">2024/06/22</div>
<div class="a" style="left:1447px;top:649px;font-size:13px;letter-spacing:-0.5px;line-height:16px;color:#465064;white-space:nowrap">-</div>
<div class="a" style="left:1554px;top:649px;font-size:13px;letter-spacing:-0.5px;line-height:16px;color:#465064;white-space:nowrap">-</div>
<div class="a" style="left:282px;top:679px;width:39px;text-align:center;font-size:13px;line-height:16px;color:#465064">16</div>
<div class="a" style="left:328px;top:679px;font-size:13px;letter-spacing:-0.5px;line-height:16px;color:#465064;white-space:nowrap">-</div>
<div class="a" style="left:437px;top:679px;font-size:13px;letter-spacing:-0.5px;line-height:16px;color:#465064;white-space:nowrap">2024 年度 Q2</div>
<div class="a" style="left:530px;top:679px;width:88px;text-align:right;font-size:13px;letter-spacing:-0.5px;line-height:16px;color:#465064;white-space:nowrap">2024/06/18</div>
<div class="a" style="left:632px;top:679px;font-size:13px;letter-spacing:-0.5px;line-height:16px;color:#465064;white-space:nowrap">上期</div>
<div class="a" style="left:709px;top:679px;font-size:13px;letter-spacing:-0.75px;line-height:16px;color:#465064;white-space:nowrap">-</div>
<div class="a" style="left:813px;top:679px;font-size:13px;letter-spacing:-0.5px;line-height:16px;color:#1b3d6e;white-space:nowrap">ｌ</div>
<div class="a" style="left:923px;top:679px;font-size:13px;letter-spacing:-0.5px;line-height:16px;color:#465064;white-space:nowrap">Perception Analysis</div>
<div class="a" style="left:1041px;top:679px;width:70px;text-align:right;font-size:13px;letter-spacing:-0.5px;line-height:16px;color:#465064;white-space:nowrap">-</div>
<div class="a" style="left:1118px;top:679px;width:75px;text-align:right;font-size:13px;letter-spacing:-0.5px;line-height:16px;color:#465064;white-space:nowrap">-</div>
<div class="a" style="left:1200px;top:679px;width:76px;text-align:right;font-size:13px;letter-spacing:-0.5px;line-height:16px;color:#465064;white-space:nowrap">70%</div>
<div class="a" style="left:1283px;top:679px;width:76px;text-align:right;font-size:13px;letter-spacing:-0.5px;line-height:16px;color:#465064;white-space:nowrap">86</div>
<div class="a" style="left:1373px;top:679px;font-size:13px;letter-spacing:-0.5px;line-height:16px;color:#465064;white-space:nowrap">2024/06/22</div>
<div class="a" style="left:1447px;top:679px;font-size:13px;letter-spacing:-0.5px;line-height:16px;color:#465064;white-space:nowrap">-</div>
<div class="a" style="left:1554px;top:679px;font-size:13px;letter-spacing:-0.5px;line-height:16px;color:#465064;white-space:nowrap">-</div>
<div class="a" style="left:282px;top:709px;width:39px;text-align:center;font-size:13px;line-height:16px;color:#465064">17</div>
<div class="a" style="left:328px;top:709px;font-size:13px;letter-spacing:-0.5px;line-height:16px;color:#465064;white-space:nowrap">-</div>
<div class="a" style="left:437px;top:709px;font-size:13px;letter-spacing:-0.5px;line-height:16px;color:#465064;white-space:nowrap">2024 年度 Q2</div>
<div class="a" style="left:530px;top:709px;width:88px;text-align:right;font-size:13px;letter-spacing:-0.5px;line-height:16px;color:#465064;white-space:nowrap">2024/06/20</div>
<div class="a" style="left:632px;top:709px;font-size:13px;letter-spacing:-0.5px;line-height:16px;color:#465064;white-space:nowrap">上期</div>
<div class="a" style="left:709px;top:709px;font-size:13px;letter-spacing:-0.75px;line-height:16px;color:#465064;white-space:nowrap">-</div>
<div class="a" style="left:813px;top:709px;font-size:13px;letter-spacing:-0.5px;line-height:16px;color:#1b3d6e;white-space:nowrap">ｆ</div>
<div class="a" style="left:923px;top:709px;font-size:13px;letter-spacing:-0.5px;line-height:16px;color:#465064;white-space:nowrap">Value Proposition</div>
<div class="a" style="left:1041px;top:709px;width:70px;text-align:right;font-size:13px;letter-spacing:-0.5px;line-height:16px;color:#465064;white-space:nowrap">-</div>
<div class="a" style="left:1118px;top:709px;width:75px;text-align:right;font-size:13px;letter-spacing:-0.5px;line-height:16px;color:#465064;white-space:nowrap">-</div>
<div class="a" style="left:1200px;top:709px;width:76px;text-align:right;font-size:13px;letter-spacing:-0.5px;line-height:16px;color:#465064;white-space:nowrap">50%</div>
<div class="a" style="left:1283px;top:709px;width:76px;text-align:right;font-size:13px;letter-spacing:-0.5px;line-height:16px;color:#465064;white-space:nowrap">86</div>
<div class="a" style="left:1373px;top:709px;font-size:13px;letter-spacing:-0.5px;line-height:16px;color:#465064;white-space:nowrap">2024/06/22</div>
<div class="a" style="left:1447px;top:709px;font-size:13px;letter-spacing:-0.5px;line-height:16px;color:#465064;white-space:nowrap">-</div>
<div class="a" style="left:1554px;top:709px;font-size:13px;letter-spacing:-0.5px;line-height:16px;color:#465064;white-space:nowrap">-</div>
<div class="a" style="left:282px;top:739px;width:39px;text-align:center;font-size:13px;line-height:16px;color:#465064">18</div>
<div class="a" style="left:328px;top:739px;font-size:13px;letter-spacing:-0.5px;line-height:16px;color:#465064;white-space:nowrap">-</div>
<div class="a" style="left:437px;top:739px;font-size:13px;letter-spacing:-0.5px;line-height:16px;color:#465064;white-space:nowrap">2024 年度 Q2</div>
<div class="a" style="left:530px;top:739px;width:88px;text-align:right;font-size:13px;letter-spacing:-0.5px;line-height:16px;color:#465064;white-space:nowrap">2024/06/25</div>
<div class="a" style="left:632px;top:739px;font-size:13px;letter-spacing:-0.5px;line-height:16px;color:#465064;white-space:nowrap">上期</div>
<div class="a" style="left:709px;top:739px;font-size:13px;letter-spacing:-0.75px;line-height:16px;color:#465064;white-space:nowrap">-</div>
<div class="a" style="left:813px;top:739px;font-size:13px;letter-spacing:-0.5px;line-height:16px;color:#1b3d6e;white-space:nowrap">ｆ</div>
<div class="a" style="left:923px;top:739px;font-size:13px;letter-spacing:-0.5px;line-height:16px;color:#465064;white-space:nowrap">Proposal/Price Quote</div>
<div class="a" style="left:1041px;top:739px;width:70px;text-align:right;font-size:13px;letter-spacing:-0.5px;line-height:16px;color:#465064;white-space:nowrap">-</div>
<div class="a" style="left:1118px;top:739px;width:75px;text-align:right;font-size:13px;letter-spacing:-0.5px;line-height:16px;color:#465064;white-space:nowrap">-</div>
<div class="a" style="left:1200px;top:739px;width:76px;text-align:right;font-size:13px;letter-spacing:-0.5px;line-height:16px;color:#465064;white-space:nowrap">75%</div>
<div class="a" style="left:1283px;top:739px;width:76px;text-align:right;font-size:13px;letter-spacing:-0.5px;line-height:16px;color:#465064;white-space:nowrap">86</div>
<div class="a" style="left:1373px;top:739px;font-size:13px;letter-spacing:-0.5px;line-height:16px;color:#465064;white-space:nowrap">2024/06/22</div>
<div class="a" style="left:1447px;top:739px;font-size:13px;letter-spacing:-0.5px;line-height:16px;color:#465064;white-space:nowrap">-</div>
<div class="a" style="left:1554px;top:739px;font-size:13px;letter-spacing:-0.5px;line-height:16px;color:#465064;white-space:nowrap">-</div>
<div class="a" style="left:282px;top:769px;width:39px;text-align:center;font-size:13px;line-height:16px;color:#465064">19</div>
<div class="a" style="left:328px;top:769px;font-size:13px;letter-spacing:-0.5px;line-height:16px;color:#465064;white-space:nowrap">-</div>
<div class="a" style="left:437px;top:769px;font-size:13px;letter-spacing:-0.5px;line-height:16px;color:#465064;white-space:nowrap">2024 年度 Q2</div>
<div class="a" style="left:530px;top:769px;width:88px;text-align:right;font-size:13px;letter-spacing:-0.5px;line-height:16px;color:#465064;white-space:nowrap">2024/06/25</div>
<div class="a" style="left:632px;top:769px;font-size:13px;letter-spacing:-0.5px;line-height:16px;color:#465064;white-space:nowrap">上期</div>
<div class="a" style="left:709px;top:769px;font-size:13px;letter-spacing:-0.75px;line-height:16px;color:#465064;white-space:nowrap">-</div>
<div class="a" style="left:813px;top:769px;font-size:13px;letter-spacing:-0.5px;line-height:16px;color:#1b3d6e;white-space:nowrap">ｈ</div>
<div class="a" style="left:923px;top:769px;font-size:13px;letter-spacing:-0.5px;line-height:16px;color:#465064;white-space:nowrap">Needs Analysis</div>
<div class="a" style="left:1041px;top:769px;width:70px;text-align:right;font-size:13px;letter-spacing:-0.5px;line-height:16px;color:#465064;white-space:nowrap">-</div>
<div class="a" style="left:1118px;top:769px;width:75px;text-align:right;font-size:13px;letter-spacing:-0.5px;line-height:16px;color:#465064;white-space:nowrap">-</div>
<div class="a" style="left:1200px;top:769px;width:76px;text-align:right;font-size:13px;letter-spacing:-0.5px;line-height:16px;color:#465064;white-space:nowrap">20%</div>
<div class="a" style="left:1283px;top:769px;width:76px;text-align:right;font-size:13px;letter-spacing:-0.5px;line-height:16px;color:#465064;white-space:nowrap">86</div>
<div class="a" style="left:1373px;top:769px;font-size:13px;letter-spacing:-0.5px;line-height:16px;color:#465064;white-space:nowrap">2024/06/22</div>
<div class="a" style="left:1447px;top:769px;font-size:13px;letter-spacing:-0.5px;line-height:16px;color:#465064;white-space:nowrap">-</div>
<div class="a" style="left:1554px;top:769px;font-size:13px;letter-spacing:-0.5px;line-height:16px;color:#465064;white-space:nowrap">-</div>
<div class="a" style="left:282px;top:799px;width:39px;text-align:center;font-size:13px;line-height:16px;color:#465064">20</div>
<div class="a" style="left:328px;top:799px;font-size:13px;letter-spacing:-0.5px;line-height:16px;color:#465064;white-space:nowrap">-</div>
<div class="a" style="left:437px;top:799px;font-size:13px;letter-spacing:-0.5px;line-height:16px;color:#465064;white-space:nowrap">2024 年度 Q3</div>
<div class="a" style="left:530px;top:799px;width:88px;text-align:right;font-size:13px;letter-spacing:-0.5px;line-height:16px;color:#465064;white-space:nowrap">2024/08/26</div>
<div class="a" style="left:632px;top:799px;font-size:13px;letter-spacing:-0.5px;line-height:16px;color:#465064;white-space:nowrap">上期</div>
<div class="a" style="left:709px;top:799px;font-size:13px;letter-spacing:-0.75px;line-height:16px;color:#465064;white-space:nowrap">Delphi Chemicals</div>
<div class="a" style="left:813px;top:799px;font-size:13px;letter-spacing:-0.5px;line-height:16px;color:#465064;white-space:nowrap">Delphi Chemicals-</div>
<div class="a" style="left:923px;top:799px;font-size:13px;letter-spacing:-0.5px;line-height:16px;color:#465064;white-space:nowrap">Closed Won</div>
<div class="a" style="left:1041px;top:799px;width:70px;text-align:right;font-size:13px;letter-spacing:-0.9px;line-height:16px;color:#465064;white-space:nowrap">¥ 1,000,000</div>
<div class="a" style="left:1118px;top:799px;width:75px;text-align:right;font-size:13px;letter-spacing:-0.9px;line-height:16px;color:#465064;white-space:nowrap">¥ 1,000,000</div>
<div class="a" style="left:1200px;top:799px;width:76px;text-align:right;font-size:13px;letter-spacing:-0.5px;line-height:16px;color:#465064;white-space:nowrap">100%</div>
<div class="a" style="left:1283px;top:799px;width:76px;text-align:right;font-size:13px;letter-spacing:-0.5px;line-height:16px;color:#465064;white-space:nowrap">66</div>
<div class="a" style="left:1373px;top:799px;font-size:13px;letter-spacing:-0.5px;line-height:16px;color:#465064;white-space:nowrap">2024/06/21</div>
<div class="a" style="left:1447px;top:799px;font-size:13px;letter-spacing:-0.5px;line-height:16px;color:#465064;white-space:nowrap">-</div>
<div class="a" style="left:1554px;top:799px;font-size:13px;letter-spacing:-0.5px;line-height:16px;color:#465064;white-space:nowrap">Web</div>
<div class="a" style="left:282px;top:821px;width:1316px;height:16px;background:#f1f1f1"></div>
<div class="a" style="left:301px;top:821px;width:1175px;height:15px;background:#c1c1c1"></div>
<svg class="a" style="left:288px;top:824px" width="7" height="9" viewBox="0 0 7 9"><path d="M6 0.5 L6 8.5 L1 4.5Z" fill="#a3a3a3"/></svg>
<svg class="a" style="left:1585px;top:824px" width="7" height="9" viewBox="0 0 7 9"><path d="M1 0.5 L1 8.5 L6 4.5Z" fill="#505050"/></svg>
<div class="a" style="left:282px;top:838px;width:1316px;height:1px;background:#e8ecf2"></div>
<div class="a" style="left:428px;top:181px;width:280px;height:639px;border:4px solid #e0141e"></div>
<!--MAINEND-->
</body></html>
